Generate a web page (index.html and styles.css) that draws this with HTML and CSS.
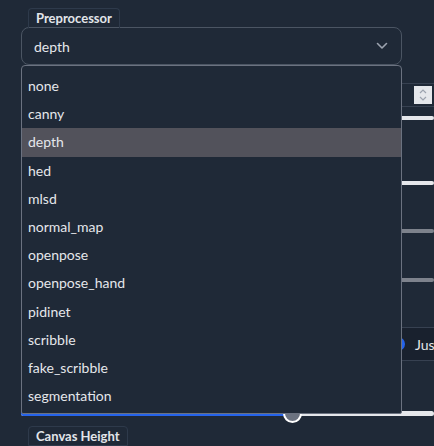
FILE: index.html
```html
<!DOCTYPE html>
<html>
<head>
<meta charset="utf-8">
<link rel="stylesheet" href="styles.css">
</head>
<body>
<div class="page">
  <div class="field">
    <span class="label">Preprocessor</span>
    <div class="select">
      <span class="value">depth</span>
      <svg class="chev" width="12" height="8" viewBox="0 0 12 8"><path d="M1.5 1.5 L6 6 L10.5 1.5" fill="none" stroke="#9ca3af" stroke-width="1.6" stroke-linecap="round" stroke-linejoin="round"/></svg>
    </div>
  </div>

  <div class="behind">
    <div class="numrow">
      <div class="spin">
        <svg width="10" height="14" viewBox="0 0 10 14"><path d="M2 5 L5 2 L8 5" fill="none" stroke="#9ca3af" stroke-width="1.2"/><path d="M2 9 L5 12 L8 9" fill="none" stroke="#9ca3af" stroke-width="1.2"/></svg>
      </div>
    </div>
    <div class="track light t1"></div>
    <div class="track light t2"></div>
    <div class="track gray t3"></div>
    <div class="track gray t4"></div>
    <div class="radiorow">
      <span class="radio"></span>
      <span class="radiotext">Just Resize</span>
    </div>
    <div class="slider">
      <div class="fill"></div>
      <div class="thumb"></div>
    </div>
    <span class="label label2">Canvas Height</span>
  </div>

  <ul class="menu">
    <li>none</li>
    <li>canny</li>
    <li class="active">depth</li>
    <li>hed</li>
    <li>mlsd</li>
    <li>normal_map</li>
    <li>openpose</li>
    <li>openpose_hand</li>
    <li>pidinet</li>
    <li>scribble</li>
    <li>fake_scribble</li>
    <li>segmentation</li>
  </ul>
</div>
</body>
</html>
```

FILE: styles.css
```css
html, body {
  margin: 0;
  padding: 0;
  background: #1f2937;
  overflow: hidden;
}
body {
  width: 434px;
  height: 446px;
  font-family: Lato, "Open Sans", sans-serif;
  color: #e5e7eb;
}
.page {
  position: relative;
  padding: 8px 0 0 21px;
}
.field {
  display: flex;
  flex-direction: column;
  align-items: flex-start;
  width: 381px;
}
.label {
  display: inline-block;
  box-sizing: border-box;
  margin-left: 7px;
  height: 20px;
  padding: 0 7px;
  border: 1px solid #2e3a4b;
  border-bottom: none;
  border-radius: 4px 4px 0 0;
  font-size: 13px;
  font-weight: 700;
  line-height: 19px;
  color: #e2e5ea;
  position: relative;
  z-index: 1;
  margin-bottom: -1px;
}
.select {
  box-sizing: border-box;
  width: 381px;
  height: 38px;
  border: 1px solid #4b5563;
  border-radius: 8px;
  display: flex;
  align-items: center;
  justify-content: space-between;
  padding: 0 13px 0 12px;
  font-size: 14px;
}
.chev {
  display: block;
}
.behind {
  width: 413px;
  display: flex;
  flex-direction: column;
  align-items: stretch;
}
.numrow {
  margin-top: 18px;
  height: 22px;
  border-top: 1px solid #374151;
  border-bottom: 1px solid #374151;
  display: flex;
  align-items: center;
  justify-content: flex-end;
  padding-right: 2px;
}
.spin {
  width: 18px;
  height: 18px;
  background: #e5e7eb;
  display: flex;
  align-items: center;
  justify-content: center;
}
.track {
  height: 4px;
  border-radius: 2px;
}
.light { background: #e5e7eb; }
.gray { background: #7d828c; }
.t1 { margin-top: 9px; }
.t2 { margin-top: 61px; }
.t3 { margin-top: 44px; }
.t4 { margin-top: 45px; }
.radiorow {
  margin-top: 45px;
  height: 32px;
  border-top: 1px solid #374151;
  border-bottom: 1px solid #374151;
  background: #19212e;
  display: flex;
  align-items: center;
  padding-left: 370px;
  gap: 10px;
  white-space: nowrap;
  overflow: hidden;
}
.radio {
  flex: none;
  width: 14px;
  height: 14px;
  border-radius: 50%;
  background: #2563eb;
}
.radiotext {
  font-size: 14px;
  color: #e5e7eb;
}
.slider {
  position: relative;
  margin-top: 50px;
  height: 5px;
  background: #e5e7eb;
  border-radius: 3px;
}
.fill {
  width: 271px;
  height: 100%;
  background: #2563eb;
  border-radius: 3px 0 0 3px;
}
.thumb {
  position: absolute;
  left: 262px;
  top: -7px;
  width: 15px;
  height: 15px;
  border: 2px solid #ffffff;
  border-radius: 50%;
  background: #6b7280;
}
.label2 {
  margin-top: 10px;
  align-self: flex-start;
  border-bottom: 1px solid #2e3a4b;
}
.menu {
  position: absolute;
  top: 65px;
  left: 21px;
  box-sizing: border-box;
  width: 381px;
  height: 349px;
  margin: 0;
  padding: 6px 0 0;
  list-style: none;
  background: #1f2937;
  border: 1px solid #6b7280;
  border-radius: 4px 4px 2px 2px;
  z-index: 5;
}
.menu li {
  height: 28.2px;
  line-height: 28.2px;
  padding-left: 6px;
  font-size: 14px;
  color: #e5e7eb;
}
.menu li.active {
  background: #52525b;
}
```
